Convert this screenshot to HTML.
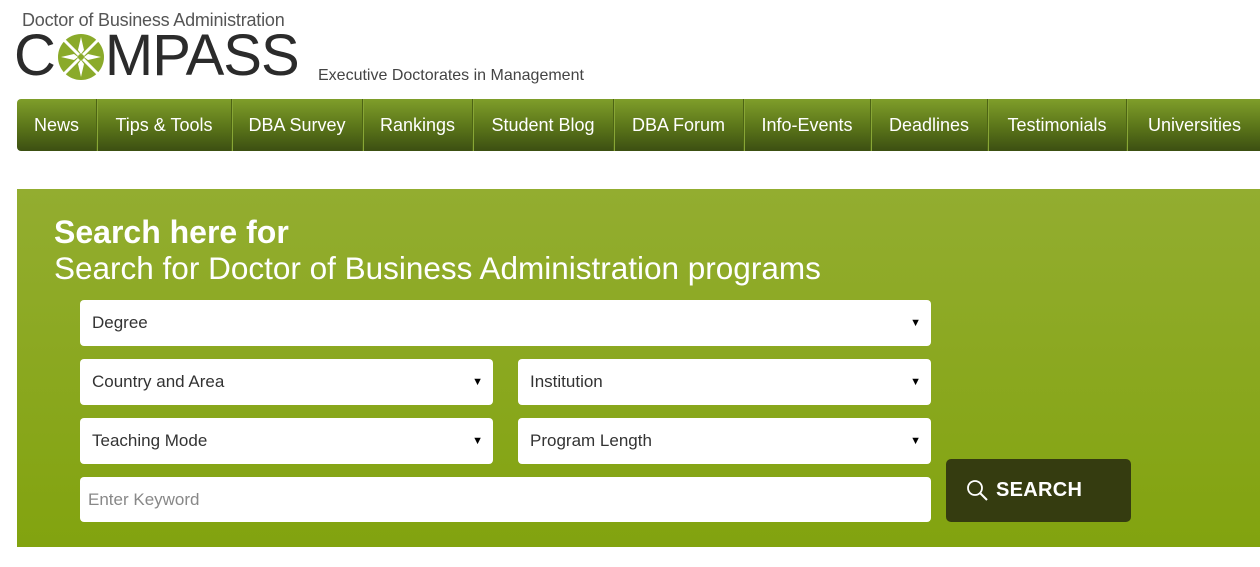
<!DOCTYPE html>
<html><head><meta charset="utf-8"><style>
*{margin:0;padding:0;box-sizing:border-box}
body{width:1260px;height:567px;background:#fff;font-family:"Liberation Sans",sans-serif;position:relative;overflow:hidden}
.abs{position:absolute}
.nav{position:absolute;left:17px;top:99px;width:1260px;height:52px;border-radius:4px 0 0 4px;background:linear-gradient(#7f9e2a,#5a7419 55%,#3c4f12);display:flex}
.nav div{height:52px;line-height:52px;color:#fff;font-size:18px;text-align:center;border-right:1px solid #4d6414;box-shadow:1px 0 0 #88a636}
.panel{position:absolute;left:17px;top:189px;width:1243px;height:358px;background:linear-gradient(#93ad30,#82a30f)}
.f{position:absolute;background:#fff;border-radius:4px;height:46px;line-height:46px;padding-left:12px;font-size:17px;color:#333}
.f span{position:absolute;right:10px;top:0;font-size:11px;color:#000}
</style></head><body>
<div class="abs" style="left:22px;top:10px;font-size:18px;color:#555;letter-spacing:-0.2px">Doctor of Business Administration</div>
<div class="abs" style="left:14px;top:25px;font-size:58px;color:#2b2b2b;letter-spacing:-1px;line-height:62px">C<span style="display:inline-block;width:50px"></span>MPASS</div>
<svg class="abs" style="left:57px;top:33px" width="48" height="48" viewBox="0 0 48 48">
<circle cx="24" cy="24" r="23" fill="#8aaa2a"/>
<path d="M6 6L42 42M42 6L6 42" stroke="#fff" stroke-width="3"/>
<path d="M24 4L27 17L24 21L21 17ZM24 44L27 31L24 27L21 31ZM4 24L17 21L21 24L17 27ZM44 24L31 21L27 24L31 27Z" fill="#fff"/>
<circle cx="24" cy="24" r="3" fill="#8aaa2a"/>
</svg>
<div class="abs" style="left:318px;top:67px;font-size:16px;color:#444">Executive Doctorates in Management</div>
<div class="nav">
<div style="width:80px">News</div><div style="width:135px">Tips &amp; Tools</div><div style="width:131px">DBA Survey</div><div style="width:110px">Rankings</div><div style="width:141px">Student Blog</div><div style="width:130px">DBA Forum</div><div style="width:127px">Info-Events</div><div style="width:117px">Deadlines</div><div style="width:139px">Testimonials</div><div style="width:135px;border:none;box-shadow:none">Universities</div>
</div>
<div class="panel"></div>
<div class="abs" style="left:54px;top:214px;font-size:32px;font-weight:bold;color:#fff">Search here for</div>
<div class="abs" style="left:54px;top:250px;font-size:31.5px;color:#fff">Search for Doctor of Business Administration programs</div>
<div class="f" style="left:80px;top:300px;width:851px">Degree<span>▼</span></div>
<div class="f" style="left:80px;top:359px;width:413px">Country and Area<span>▼</span></div>
<div class="f" style="left:518px;top:359px;width:413px">Institution<span>▼</span></div>
<div class="f" style="left:80px;top:418px;width:413px">Teaching Mode<span>▼</span></div>
<div class="f" style="left:518px;top:418px;width:413px">Program Length<span>▼</span></div>
<div class="f" style="left:80px;top:477px;width:851px;height:45px;line-height:45px;padding-left:8px;color:#888">Enter Keyword</div>
<div class="abs" style="left:946px;top:459px;width:185px;height:63px;background:#353c10;border-radius:5px;color:#fff;font-weight:bold;font-size:20px;letter-spacing:0.3px;line-height:63px;padding-left:50px">SEARCH
<svg class="abs" style="left:20px;top:20px" width="24" height="24" viewBox="0 0 24 24"><circle cx="9" cy="9" r="7" fill="none" stroke="#fff" stroke-width="1.8"/><path d="M14 14L21 21" stroke="#fff" stroke-width="2"/></svg></div>
</body></html>
